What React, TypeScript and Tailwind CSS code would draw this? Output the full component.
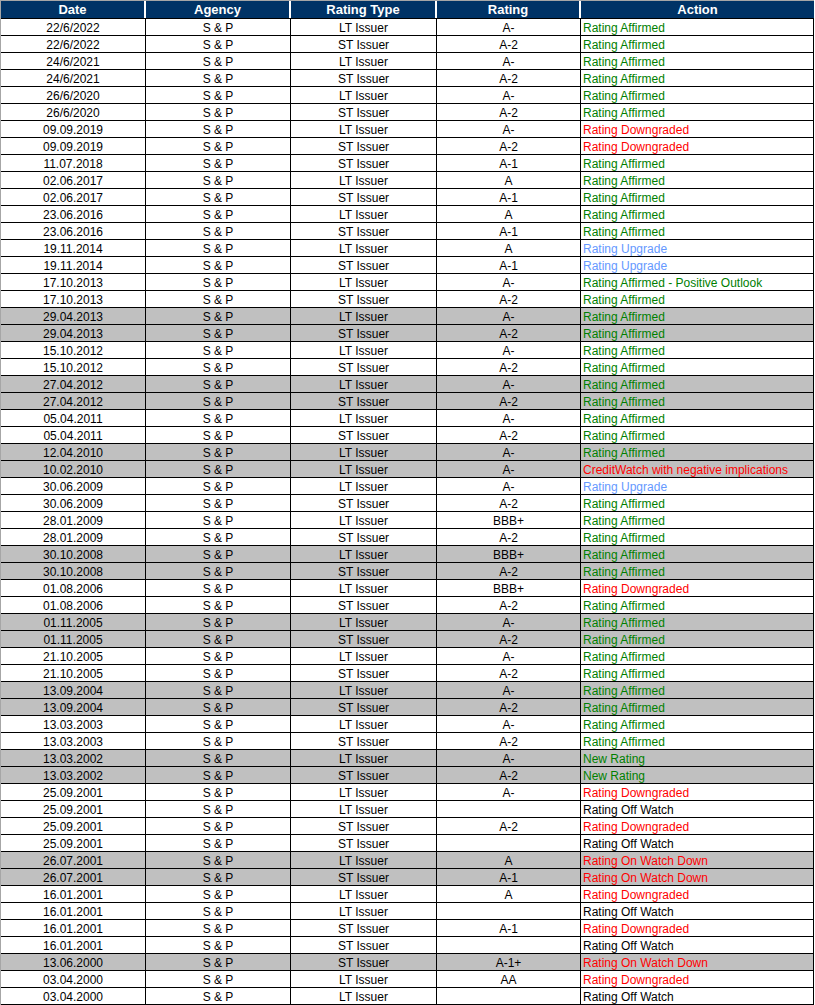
import React from 'react';

type Tone = 'green' | 'red' | 'blue' | 'black';

interface RatingRow {
  date: string;
  type: 'LT' | 'ST';
  rating: string;
  action: string;
  tone: Tone;
  shaded?: boolean;
}

const AFF = 'Rating Affirmed';
const DOWN = 'Rating Downgraded';
const UP = 'Rating Upgrade';
const OFF = 'Rating Off Watch';
const WATCH = 'Rating On Watch Down';

const ROWS: RatingRow[] = [
  { date: '22/6/2022', type: 'LT', rating: 'A-', action: AFF, tone: 'green' },
  { date: '22/6/2022', type: 'ST', rating: 'A-2', action: AFF, tone: 'green' },
  { date: '24/6/2021', type: 'LT', rating: 'A-', action: AFF, tone: 'green' },
  { date: '24/6/2021', type: 'ST', rating: 'A-2', action: AFF, tone: 'green' },
  { date: '26/6/2020', type: 'LT', rating: 'A-', action: AFF, tone: 'green' },
  { date: '26/6/2020', type: 'ST', rating: 'A-2', action: AFF, tone: 'green' },
  { date: '09.09.2019', type: 'LT', rating: 'A-', action: DOWN, tone: 'red' },
  { date: '09.09.2019', type: 'ST', rating: 'A-2', action: DOWN, tone: 'red' },
  { date: '11.07.2018', type: 'ST', rating: 'A-1', action: AFF, tone: 'green' },
  { date: '02.06.2017', type: 'LT', rating: 'A', action: AFF, tone: 'green' },
  { date: '02.06.2017', type: 'ST', rating: 'A-1', action: AFF, tone: 'green' },
  { date: '23.06.2016', type: 'LT', rating: 'A', action: AFF, tone: 'green' },
  { date: '23.06.2016', type: 'ST', rating: 'A-1', action: AFF, tone: 'green' },
  { date: '19.11.2014', type: 'LT', rating: 'A', action: UP, tone: 'blue' },
  { date: '19.11.2014', type: 'ST', rating: 'A-1', action: UP, tone: 'blue' },
  { date: '17.10.2013', type: 'LT', rating: 'A-', action: 'Rating Affirmed - Positive Outlook', tone: 'green' },
  { date: '17.10.2013', type: 'ST', rating: 'A-2', action: AFF, tone: 'green' },
  { date: '29.04.2013', type: 'LT', rating: 'A-', action: AFF, tone: 'green', shaded: true },
  { date: '29.04.2013', type: 'ST', rating: 'A-2', action: AFF, tone: 'green', shaded: true },
  { date: '15.10.2012', type: 'LT', rating: 'A-', action: AFF, tone: 'green' },
  { date: '15.10.2012', type: 'ST', rating: 'A-2', action: AFF, tone: 'green' },
  { date: '27.04.2012', type: 'LT', rating: 'A-', action: AFF, tone: 'green', shaded: true },
  { date: '27.04.2012', type: 'ST', rating: 'A-2', action: AFF, tone: 'green', shaded: true },
  { date: '05.04.2011', type: 'LT', rating: 'A-', action: AFF, tone: 'green' },
  { date: '05.04.2011', type: 'ST', rating: 'A-2', action: AFF, tone: 'green' },
  { date: '12.04.2010', type: 'LT', rating: 'A-', action: AFF, tone: 'green', shaded: true },
  { date: '10.02.2010', type: 'LT', rating: 'A-', action: 'CreditWatch with negative implications', tone: 'red', shaded: true },
  { date: '30.06.2009', type: 'LT', rating: 'A-', action: UP, tone: 'blue' },
  { date: '30.06.2009', type: 'ST', rating: 'A-2', action: AFF, tone: 'green' },
  { date: '28.01.2009', type: 'LT', rating: 'BBB+', action: AFF, tone: 'green' },
  { date: '28.01.2009', type: 'ST', rating: 'A-2', action: AFF, tone: 'green' },
  { date: '30.10.2008', type: 'LT', rating: 'BBB+', action: AFF, tone: 'green', shaded: true },
  { date: '30.10.2008', type: 'ST', rating: 'A-2', action: AFF, tone: 'green', shaded: true },
  { date: '01.08.2006', type: 'LT', rating: 'BBB+', action: DOWN, tone: 'red' },
  { date: '01.08.2006', type: 'ST', rating: 'A-2', action: AFF, tone: 'green' },
  { date: '01.11.2005', type: 'LT', rating: 'A-', action: AFF, tone: 'green', shaded: true },
  { date: '01.11.2005', type: 'ST', rating: 'A-2', action: AFF, tone: 'green', shaded: true },
  { date: '21.10.2005', type: 'LT', rating: 'A-', action: AFF, tone: 'green' },
  { date: '21.10.2005', type: 'ST', rating: 'A-2', action: AFF, tone: 'green' },
  { date: '13.09.2004', type: 'LT', rating: 'A-', action: AFF, tone: 'green', shaded: true },
  { date: '13.09.2004', type: 'ST', rating: 'A-2', action: AFF, tone: 'green', shaded: true },
  { date: '13.03.2003', type: 'LT', rating: 'A-', action: AFF, tone: 'green' },
  { date: '13.03.2003', type: 'ST', rating: 'A-2', action: AFF, tone: 'green' },
  { date: '13.03.2002', type: 'LT', rating: 'A-', action: 'New Rating', tone: 'green', shaded: true },
  { date: '13.03.2002', type: 'ST', rating: 'A-2', action: 'New Rating', tone: 'green', shaded: true },
  { date: '25.09.2001', type: 'LT', rating: 'A-', action: DOWN, tone: 'red' },
  { date: '25.09.2001', type: 'LT', rating: '', action: OFF, tone: 'black' },
  { date: '25.09.2001', type: 'ST', rating: 'A-2', action: DOWN, tone: 'red' },
  { date: '25.09.2001', type: 'ST', rating: '', action: OFF, tone: 'black' },
  { date: '26.07.2001', type: 'LT', rating: 'A', action: WATCH, tone: 'red', shaded: true },
  { date: '26.07.2001', type: 'ST', rating: 'A-1', action: WATCH, tone: 'red', shaded: true },
  { date: '16.01.2001', type: 'LT', rating: 'A', action: DOWN, tone: 'red' },
  { date: '16.01.2001', type: 'LT', rating: '', action: OFF, tone: 'black' },
  { date: '16.01.2001', type: 'ST', rating: 'A-1', action: DOWN, tone: 'red' },
  { date: '16.01.2001', type: 'ST', rating: '', action: OFF, tone: 'black' },
  { date: '13.06.2000', type: 'ST', rating: 'A-1+', action: WATCH, tone: 'red', shaded: true },
  { date: '03.04.2000', type: 'LT', rating: 'AA', action: DOWN, tone: 'red' },
  { date: '03.04.2000', type: 'LT', rating: '', action: OFF, tone: 'black' },
];

const TONE_CLASS: Record<Tone, string> = {
  green: 'text-[#008000]',
  red: 'text-[#ff0000]',
  blue: 'text-[#6699ff]',
  black: 'text-black',
};

const GRID = 'grid grid-cols-[145px_145px_146px_144px_233px]';
const HEADERS = ['Date', 'Agency', 'Rating Type', 'Rating', 'Action'];

const App: React.FC = () => {
  return (
    <div className="w-[815px] h-[1005px] bg-white overflow-hidden font-['Liberation_Sans',Arial,sans-serif]">
      <div className="border-t border-l border-[#a6a6a6] w-[814px]">
        <div className={`${GRID} h-[18px] border-b border-black`}>
          {HEADERS.map((h, i) => (
            <div
              key={h}
              className={`bg-[#003366] text-white font-bold text-[13px] leading-[17px] text-center ${i < 4 ? 'border-r-2 border-white' : ''}`}
            >
              {h}
            </div>
          ))}
        </div>
        {ROWS.map((row, index) => (
          <div
            key={index}
            className={`${GRID} h-[17px] border-b border-black text-[12px] leading-[16px] ${row.shaded ? 'bg-[#c0c0c0]' : 'bg-white'}`}
          >
            <div className="border-r border-black pt-px text-center text-black">{row.date}</div>
            <div className="border-r border-black pt-px text-center text-black">S &amp; P</div>
            <div className="border-r border-black pt-px text-center text-black">{row.type} Issuer</div>
            <div className="border-r border-black pt-px text-center text-black">{row.rating}</div>
            <div className={`border-r border-black pt-px pl-[2px] whitespace-nowrap ${TONE_CLASS[row.tone]}`}>{row.action}</div>
          </div>
        ))}
      </div>
    </div>
  );
};

export default App;
